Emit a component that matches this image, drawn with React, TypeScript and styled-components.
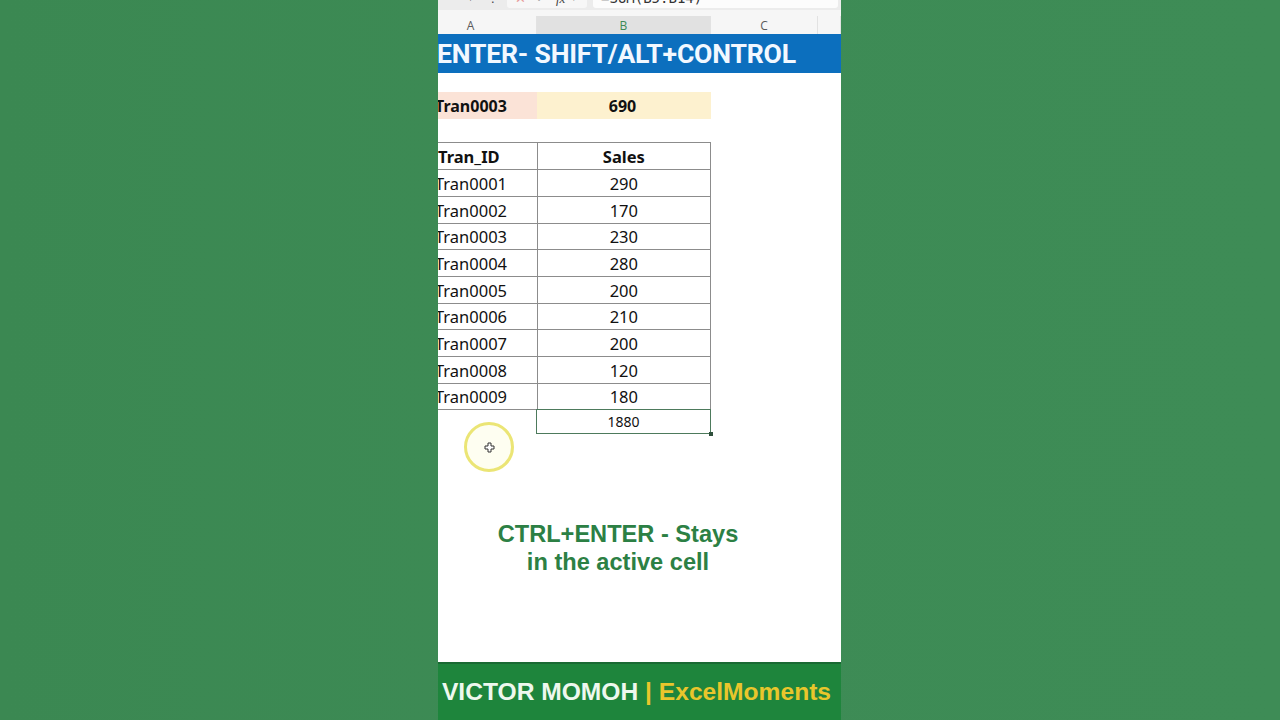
import React from "react";
import styled, { createGlobalStyle } from "styled-components";

const Global = createGlobalStyle`
  html, body { margin: 0; padding: 0; }
  body { background: #3d8a54; width: 1280px; height: 720px; overflow: hidden; }
`;

const Stage = styled.div`
  width: 1280px;
  height: 720px;
  display: flex;
  justify-content: flex-start;
  background: linear-gradient(90deg, #3b8852 0%, #3d8b55 50%, #3e8c56 100%);
`;

const Panel = styled.div`
  margin-left: 438px;
  width: 403px;
  height: 720px;
  display: flex;
  flex-direction: column;
  background: #ffffff;
  position: relative;
  overflow: hidden;
  font-family: "Noto Sans", "Liberation Sans", sans-serif;
`;

const FormulaStrip = styled.div`
  height: 10px;
  background: #ececec;
  display: flex;
  align-items: flex-end;
  overflow: hidden;
  flex-shrink: 0;
`;

const FormulaInner = styled.div`
  height: 22px;
  display: flex;
  align-items: center;
  flex-shrink: 0;
  width: 100%;
  margin-bottom: 1px;
`;

const Glyph = styled.span<{ $x: number; $c?: string; $s?: number }>`
  margin-left: ${(p) => p.$x}px;
  color: ${(p) => p.$c || "#444"};
  font-size: ${(p) => p.$s || 13}px;
  font-family: "DejaVu Sans", sans-serif;
  line-height: 1;
`;

const FxText = styled.i`
  font-family: "Liberation Serif", serif;
`;

const IconBox = styled.div`
  margin-left: 8px;
  width: 80px;
  height: 20px;
  background: #f7f7f7;
  border-radius: 3px;
  display: flex;
  align-items: center;
`;

const FormulaBox = styled.div`
  margin-left: 6px;
  flex: 1;
  margin-right: 3px;
  height: 20px;
  background: #fcfcfc;
  border-radius: 3px;
  display: flex;
  align-items: center;
  padding-left: 8px;
  font-family: "DejaVu Sans Mono", "Liberation Mono", monospace;
  font-size: 14px;
  color: #333;
`;

const HeaderRow = styled.div`
  height: 24px;
  display: flex;
  background: #f6f6f6;
  flex-shrink: 0;
  padding-top: 6px;
  box-sizing: border-box;
`;

const ColHead = styled.div<{ $w: number; $sel?: boolean; $shift?: number }>`
  width: ${(p) => p.$w}px;
  flex-shrink: 0;
  display: flex;
  align-items: center;
  justify-content: center;
  padding-right: ${(p) => p.$shift || 0}px;
  font-family: "Open Sans", "Noto Sans", sans-serif;
  font-size: 12px;
  color: ${(p) => (p.$sel ? "#3d8a55" : "#5a5a5a")};
  background: ${(p) => (p.$sel ? "#e1e1e1" : "transparent")};
  border-right: 1px solid #e2e2e2;
  box-sizing: border-box;
`;

const Banner = styled.div`
  height: 39px;
  background: #0c6fbe;
  display: flex;
  align-items: center;
  flex-shrink: 0;
  color: #f2f8ff;
  font-family: "Roboto", "Liberation Sans", sans-serif;
  font-weight: 700;
  font-size: 26.6px;
  letter-spacing: -0.2px;
  white-space: nowrap;
  overflow: hidden;
`;

const BannerText = styled.span`
  margin-left: -1px;
`;

const Sheet = styled.div`
  flex: 1;
  display: flex;
  flex-direction: column;
  padding-top: 19px;
  position: relative;
`;

const LookupRow = styled.div`
  display: flex;
  height: 27px;
`;

const LookupCell = styled.div<{ $w: number; $bg: string; $center?: boolean }>`
  width: ${(p) => p.$w}px;
  background: ${(p) => p.$bg};
  display: flex;
  align-items: center;
  justify-content: ${(p) => (p.$center ? "center" : "flex-start")};
  font-weight: 700;
  font-size: 16px;
  color: #111;
  text-indent: -3px;
  white-space: nowrap;
`;

const Table = styled.div`
  margin-top: 23px;
  width: 273px;
  border-top: 1px solid #8c8c8c;
  display: flex;
  flex-direction: column;
`;

const Row = styled.div<{ $h: number }>`
  display: flex;
  height: ${(p) => p.$h}px;
  border-bottom: 1px solid #8c8c8c;
`;

const CellA = styled.div<{ $bold?: boolean }>`
  width: 99px;
  border-right: 1px solid #8c8c8c;
  display: flex;
  align-items: center;
  font-size: 16.5px;
  font-weight: ${(p) => (p.$bold ? 700 : 400)};
  color: #111;
  white-space: nowrap;
  overflow: hidden;
`;

const AText = styled.span<{ $bold?: boolean }>`
  margin-left: ${(p) => (p.$bold ? 0 : -3)}px;
`;

const CellB = styled.div<{ $bold?: boolean }>`
  width: 173px;
  border-right: 1px solid #8c8c8c;
  display: flex;
  align-items: center;
  justify-content: center;
  font-size: 16.5px;
  font-weight: ${(p) => (p.$bold ? 700 : 400)};
  color: #111;
`;

const TotalRow = styled.div`
  display: flex;
  height: 25px;
`;

const TotalSpacer = styled.div`
  width: 98px;
`;

const TotalCell = styled.div`
  width: 175px;
  height: 25px;
  box-sizing: border-box;
  margin-top: -1px;
  border: 1px solid #4d7a5c;
  display: flex;
  align-items: center;
  justify-content: center;
  font-size: 14px;
  color: #111;
  position: relative;
`;

const Handle = styled.div`
  position: absolute;
  right: -3px;
  bottom: -3px;
  width: 4px;
  height: 4px;
  background: #2f4f3c;
`;

const CursorRing = styled.div`
  position: absolute;
  left: 26px;
  top: 349px;
  width: 50px;
  height: 50px;
  border-radius: 50%;
  border: 3px solid #ebe575;
  box-sizing: border-box;
  background: rgba(250, 250, 200, 0.25);
  display: flex;
  align-items: center;
  justify-content: center;
`;

const Caption = styled.div`
  margin-top: 85px;
  width: 360px;
  text-align: center;
  font-family: "Liberation Sans", Arial, sans-serif;
  font-weight: 700;
  font-size: 23.6px;
  line-height: 28px;
  color: #2c8044;
`;

const Footer = styled.div`
  height: 58px;
  flex-shrink: 0;
  background: #1e853c;
  border-top: 2px solid #1a6a33;
  box-sizing: border-box;
  display: flex;
  align-items: center;
  justify-content: center;
  font-family: "Liberation Sans", Arial, sans-serif;
  font-weight: 700;
  font-size: 24.6px;
  white-space: nowrap;
  padding-right: 6px;
`;

const FooterName = styled.span`
  color: #eef8ee;
`;

const FooterBrand = styled.span`
  color: #e9c62c;
`;

const rows: [string, string, number][] = [
  ["Tran0001", "290", 26],
  ["Tran0002", "170", 26],
  ["Tran0003", "230", 25],
  ["Tran0004", "280", 26],
  ["Tran0005", "200", 26],
  ["Tran0006", "210", 25],
  ["Tran0007", "200", 26],
  ["Tran0008", "120", 26],
  ["Tran0009", "180", 25],
];

export default function App() {
  return (
    <>
      <Global />
      <Stage>
        <Panel>
          <FormulaStrip>
            <FormulaInner>
              <Glyph $x={30} $s={10}>▾</Glyph>
              <Glyph $x={14} $s={12}>⋮</Glyph>
              <IconBox>
                <Glyph $x={8} $c="#e89a9a" $s={13}>✕</Glyph>
                <Glyph $x={10} $c="#999" $s={12}>✓</Glyph>
                <Glyph $x={10} $c="#444" $s={13}>
                  <FxText>fx</FxText>
                </Glyph>
                <Glyph $x={6} $c="#777" $s={9}>▾</Glyph>
              </IconBox>
              <FormulaBox>=SUM(B5:B14)</FormulaBox>
            </FormulaInner>
          </FormulaStrip>
          <HeaderRow>
            <ColHead $w={99} $shift={33}>A</ColHead>
            <ColHead $w={174} $sel>B</ColHead>
            <ColHead $w={107}>C</ColHead>
            <ColHead $w={23} />
          </HeaderRow>
          <Banner>
            <BannerText>ENTER- SHIFT/ALT+CONTROL</BannerText>
          </Banner>
          <Sheet>
            <LookupRow>
              <LookupCell $w={99} $bg="#fbe3d7">Tran0003</LookupCell>
              <LookupCell $w={174} $bg="#fdf1cf" $center>690</LookupCell>
            </LookupRow>
            <Table>
              <Row $h={26}>
                <CellA $bold>
                  <AText $bold>Tran_ID</AText>
                </CellA>
                <CellB $bold>Sales</CellB>
              </Row>
              {rows.map(([id, v, h]) => (
                <Row key={id} $h={h}>
                  <CellA>
                    <AText>{id}</AText>
                  </CellA>
                  <CellB>{v}</CellB>
                </Row>
              ))}
            </Table>
            <TotalRow>
              <TotalSpacer />
              <TotalCell>
                1880
                <Handle />
              </TotalCell>
            </TotalRow>
            <CursorRing>
              <svg width="11" height="11" viewBox="0 0 11 11">
                <path
                  d="M4 1h3v3h3v3H7v3H4V7H1V4h3z"
                  fill="#fff"
                  stroke="#333"
                  strokeWidth="1"
                />
              </svg>
            </CursorRing>
            <Caption>
              CTRL+ENTER - Stays
              <br />
              in the active cell
            </Caption>
          </Sheet>
          <Footer>
            <FooterName>VICTOR MOMOH&nbsp;</FooterName>
            <FooterBrand>| ExcelMoments</FooterBrand>
          </Footer>
        </Panel>
      </Stage>
    </>
  );
}
